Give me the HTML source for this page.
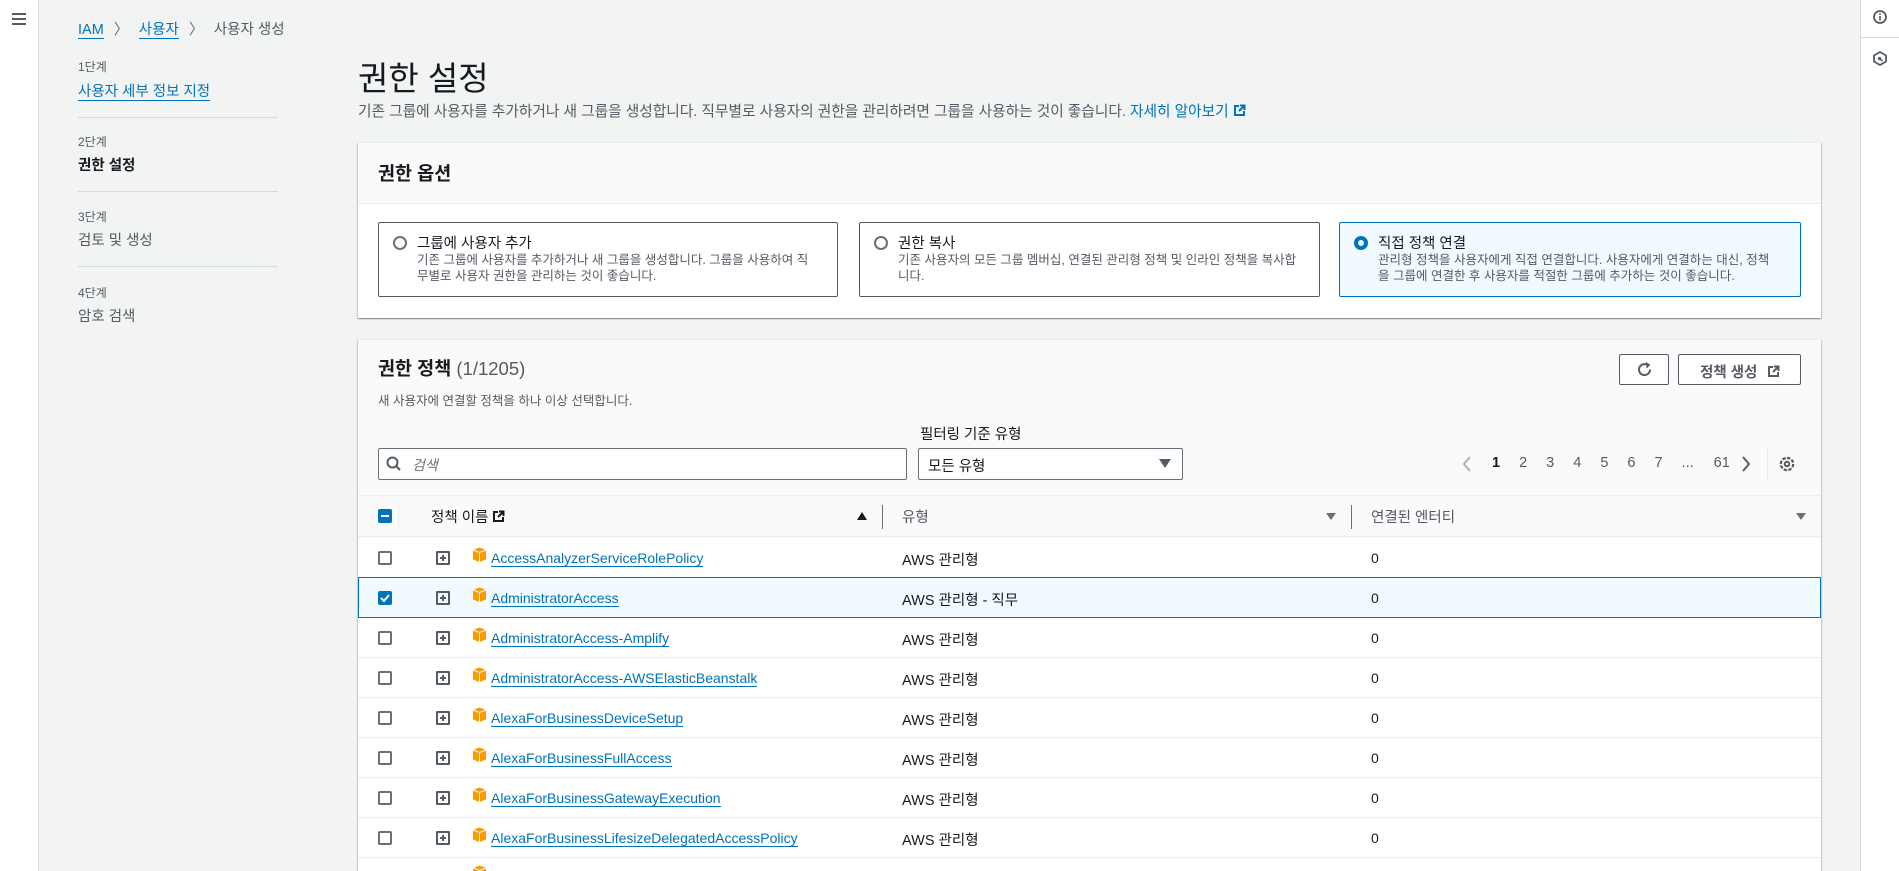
<!DOCTYPE html>
<html><head><meta charset="utf-8"><style>
*{box-sizing:border-box;margin:0;padding:0}
html{overflow:hidden;width:1899px;height:871px}
body{width:1899px;height:871px;overflow:hidden;background:#f2f3f3;font-family:"Liberation Sans","Noto Sans CJK KR",sans-serif;color:#16191f;font-size:14px;position:relative}
.a{position:absolute;white-space:nowrap}
.lnk{color:#0073bb;border-bottom:1px solid #0073bb}
.sec{color:#545b64}
.panel{position:absolute;background:#fff;box-shadow:0 1px 1px 0 rgba(0,28,36,.3),1px 1px 1px 0 rgba(0,28,36,.15),-1px 1px 1px 0 rgba(0,28,36,.15);border-top:1px solid #eaeded}
.cb{position:absolute;width:14px;height:14px;border:2px solid #687078;border-radius:2px;background:#fff}
.plus{position:absolute;width:14px;height:14px;border:2px solid #545b64;border-radius:1px}
.plus:before{content:"";position:absolute;left:2px;top:4px;width:6px;height:2px;background:#545b64}
.plus:after{content:"";position:absolute;left:4px;top:2px;width:2px;height:6px;background:#545b64}
.row{position:absolute;left:358px;width:1463px;height:40px;border-bottom:1px solid #eaeded}
.tile{position:absolute;top:222px;height:75px;border:1px solid #545b64;border-radius:2px}
.radio{position:absolute;left:14px;top:13px;width:14px;height:14px;border:2px solid #687078;border-radius:50%}
.desc{font-size:12.5px;line-height:16px;white-space:normal;width:400px}
.pn{font-size:14px}
</style></head><body>
<div class="a" style="left:0;top:0;width:39px;height:871px;background:#fff;border-right:1px solid #d5dbdb"></div>
<div class="a" style="left:12px;top:13px;width:14px;height:2px;background:#545b64;box-shadow:0 5px 0 #545b64,0 10px 0 #545b64"></div>
<div class="a" style="left:1860px;top:0;width:39px;height:871px;background:#fff;border-left:1px solid #d5dbdb"></div>
<div class="a" style="left:1861px;top:37px;width:38px;height:1px;background:#d5dbdb"></div>
<svg class="a" style="left:1873px;top:10px" width="14" height="14" viewBox="0 0 14 14"><circle cx="7" cy="7" r="6" fill="none" stroke="#545b64" stroke-width="1.8"/><rect x="6.2" y="6" width="1.6" height="4.5" fill="#545b64"/><rect x="6.2" y="3.2" width="1.6" height="1.6" fill="#545b64"/></svg>
<svg class="a" style="left:1873px;top:51px" width="14" height="15" viewBox="0 0 14 15"><path d="M7 1 L13 4.5 V10.5 L7 14 L1 10.5 V4.5 Z" fill="none" stroke="#545b64" stroke-width="1.8"/><circle cx="6.5" cy="7.5" r="1.6" fill="#545b64"/><path d="M7 8 L9.5 10" stroke="#545b64" stroke-width="1.6"/></svg>

<div class="a" style="left:78px;top:18px;font-size:14.5px"><span class="lnk">IAM</span><span style="color:#687078;margin:0 10px;font-size:15px">〉</span><span class="lnk">사용자</span><span style="color:#687078;margin:0 10px;font-size:15px">〉</span><span class="sec">사용자 생성</span></div>

<div class="a sec" style="left:78px;top:58px;font-size:12px">1단계</div>
<div class="a" style="left:78px;top:80px;font-size:14.5px"><span class="lnk">사용자 세부 정보 지정</span></div>
<div class="a" style="left:78px;top:117px;width:200px;height:1px;background:#d5dbdb"></div>
<div class="a sec" style="left:78px;top:133px;font-size:12px">2단계</div>
<div class="a" style="left:78px;top:154px;font-size:14.5px;font-weight:bold">권한 설정</div>
<div class="a" style="left:78px;top:191px;width:200px;height:1px;background:#d5dbdb"></div>
<div class="a sec" style="left:78px;top:208px;font-size:12px">3단계</div>
<div class="a sec" style="left:78px;top:229px;font-size:14.5px">검토 및 생성</div>
<div class="a" style="left:78px;top:266px;width:200px;height:1px;background:#d5dbdb"></div>
<div class="a sec" style="left:78px;top:284px;font-size:12px">4단계</div>
<div class="a sec" style="left:78px;top:305px;font-size:14.5px">암호 검색</div>

<div class="a" style="left:358px;top:52px;font-size:33px">권한 설정</div>
<div class="a sec" style="left:358px;top:100px;font-size:14.7px">기존 그룹에 사용자를 추가하거나 새 그룹을 생성합니다. 직무별로 사용자의 권한을 관리하려면 그룹을 사용하는 것이 좋습니다. <span style="color:#0073bb">자세히 알아보기</span> <svg width="13" height="13" viewBox="0 0 13 13" style="vertical-align:-1px"><path d="M6 2H2V11H11V7" fill="none" stroke="#0073bb" stroke-width="2"/><path d="M7 1.5H11.5V6M11 2L6 7" fill="none" stroke="#0073bb" stroke-width="2"/></svg></div>

<div class="panel" style="left:358px;top:142px;width:1463px;height:176px"></div>
<div class="a" style="left:358px;top:143px;width:1463px;height:61px;background:#fafafa;border-bottom:1px solid #eaeded"></div>
<div class="a" style="left:378px;top:160px;font-size:18.5px;font-weight:bold">권한 옵션</div>
<div class="tile" style="left:378px;width:460px">
 <div class="radio"></div>
 <div class="a" style="left:38px;top:9px;font-size:14.5px">그룹에 사용자 추가</div>
 <div class="a sec desc" style="left:38px;top:29px">기존 그룹에 사용자를 추가하거나 새 그룹을 생성합니다. 그룹을 사용하여 직무별로 사용자 권한을 관리하는 것이 좋습니다.</div>
</div>
<div class="tile" style="left:859px;width:461px">
 <div class="radio"></div>
 <div class="a" style="left:38px;top:9px;font-size:14.5px">권한 복사</div>
 <div class="a sec desc" style="left:38px;top:29px">기존 사용자의 모든 그룹 멤버십, 연결된 관리형 정책 및 인라인 정책을 복사합니다.</div>
</div>
<div class="tile" style="left:1339px;width:462px;border-color:#0073bb;background:#f1faff">
 <div class="radio" style="border:4px solid #0073bb"></div>
 <div class="a" style="left:38px;top:9px;font-size:14.5px">직접 정책 연결</div>
 <div class="a sec desc" style="left:38px;top:29px">관리형 정책을 사용자에게 직접 연결합니다. 사용자에게 연결하는 대신, 정책을 그룹에 연결한 후 사용자를 적절한 그룹에 추가하는 것이 좋습니다.</div>
</div>

<div class="panel" style="left:358px;top:339px;width:1463px;height:532px;background:#fafafa"></div>
<div class="a" style="left:378px;top:355px;font-size:18.5px"><b>권한 정책</b> <span class="sec">(1/1205)</span></div>
<div class="a sec" style="left:378px;top:390px;font-size:12.5px">새 사용자에 연결할 정책을 하나 이상 선택합니다.</div>
<div class="a" style="left:1619px;top:354px;width:50px;height:31px;border:1px solid #545b64;border-radius:2px;background:#fff"></div>
<svg class="a" style="left:1636px;top:361px" width="17" height="17" viewBox="0 0 17 17"><path d="M14 8.5A5.5 5.5 0 1 1 11.5 4" fill="none" stroke="#545b64" stroke-width="2"/><path d="M10 1.5L13.5 4 10.5 7" fill="#545b64" stroke="#545b64" stroke-width="1"/></svg>
<div class="a" style="left:1678px;top:354px;width:123px;height:31px;border:1px solid #545b64;border-radius:2px;background:#fff;font-size:14.5px;padding:6px 0 0 21px;color:#545b64;font-weight:bold">정책 생성 <svg width="13" height="13" viewBox="0 0 13 13" style="vertical-align:-1px;margin-left:6px"><path d="M6 2H2V11H11V7" fill="none" stroke="#545b64" stroke-width="2"/><path d="M7 1.5H11.5V6M11 2L6 7" fill="none" stroke="#545b64" stroke-width="2"/></svg></div>

<div class="a" style="left:920px;top:423px;font-size:14.5px">필터링 기준 유형</div>
<div class="a" style="left:378px;top:448px;width:529px;height:32px;border:1px solid #687078;border-radius:2px;background:#fff"></div>
<svg class="a" style="left:386px;top:456px" width="16" height="16" viewBox="0 0 16 16"><circle cx="6.5" cy="6.5" r="5" fill="none" stroke="#545b64" stroke-width="2"/><path d="M10 10L14 14" stroke="#545b64" stroke-width="2"/></svg>
<div class="a sec" style="left:412px;top:455px;font-style:italic;color:#687078">검색</div>
<div class="a" style="left:918px;top:448px;width:265px;height:32px;border:1px solid #687078;border-radius:2px;background:#fff"></div>
<div class="a" style="left:928px;top:455px;font-size:14.5px">모든 유형</div>
<div class="a" style="left:1159px;top:459px;width:0;height:0;border-left:6px solid transparent;border-right:6px solid transparent;border-top:9px solid #545b64"></div>

<svg class="a" style="left:1462px;top:455px" width="10" height="18" viewBox="0 0 10 18"><path d="M8 2L2 9 8 16" fill="none" stroke="#aab7b8" stroke-width="2"/></svg>
<div class="a" style="left:1492px;top:455px;font-size:14.5px"><b>1</b><span class="sec" style="margin-left:19px">2</span><span class="sec" style="margin-left:19px">3</span><span class="sec" style="margin-left:19px">4</span><span class="sec" style="margin-left:19px">5</span><span class="sec" style="margin-left:19px">6</span><span class="sec" style="margin-left:19px">7</span><span class="sec" style="margin-left:19px">...</span><span class="sec" style="margin-left:20px">61</span></div>
<svg class="a" style="left:1741px;top:455px" width="10" height="18" viewBox="0 0 10 18"><path d="M2 2L8 9 2 16" fill="none" stroke="#545b64" stroke-width="2"/></svg>
<div class="a" style="left:1767px;top:448px;width:1px;height:32px;background:#eaeded"></div>
<svg class="a" style="left:1778px;top:455px" width="18" height="18" viewBox="0 0 16 16"><circle cx="8" cy="8" r="5.5" fill="none" stroke="#545b64" stroke-width="2" stroke-dasharray="3 1.3"/><circle cx="8" cy="8" r="2" fill="none" stroke="#545b64" stroke-width="1.8"/></svg>

<div class="a" style="left:358px;top:495px;width:1463px;height:42px;border-top:1px solid #eaeded;border-bottom:1px solid #eaeded;background:#fafafa"></div>
<div class="a" style="left:378px;top:509px;width:14px;height:14px;background:#0073bb;border-radius:2px"><div style="position:absolute;left:3px;top:6px;width:8px;height:2px;background:#fff"></div></div>
<div class="a" style="left:398px;top:505px;width:1px;height:24px;background:#eaeded"></div>
<div class="a" style="left:431px;top:506px;font-size:14.5px">정책 이름 <svg width="13" height="13" viewBox="0 0 13 13" style="vertical-align:-1px"><path d="M6 2H2V11H11V7" fill="none" stroke="#16191f" stroke-width="2"/><path d="M7 1.5H11.5V6M11 2L6 7" fill="none" stroke="#16191f" stroke-width="2"/></svg></div>
<div class="a" style="left:857px;top:512px;width:0;height:0;border-left:5px solid transparent;border-right:5px solid transparent;border-bottom:8px solid #16191f"></div>
<div class="a" style="left:882px;top:505px;width:1px;height:24px;background:#687078"></div>
<div class="a sec" style="left:902px;top:506px;font-size:14.5px">유형</div>
<div class="a" style="left:1326px;top:513px;width:0;height:0;border-left:5px solid transparent;border-right:5px solid transparent;border-top:7px solid #687078"></div>
<div class="a" style="left:1351px;top:505px;width:1px;height:24px;background:#687078"></div>
<div class="a sec" style="left:1371px;top:506px;font-size:14.5px">연결된 엔터티</div>
<div class="a" style="left:1796px;top:513px;width:0;height:0;border-left:5px solid transparent;border-right:5px solid transparent;border-top:7px solid #687078"></div>

<div class="row" style="top:538px;background:#fff"></div>
<div class="row" style="background:#f1faff;border:1px solid #0073bb;height:41px;top:577px"></div>
<div class="row" style="top:618px;background:#fff"></div>
<div class="row" style="top:658px;background:#fff"></div>
<div class="row" style="top:698px;background:#fff"></div>
<div class="row" style="top:738px;background:#fff"></div>
<div class="row" style="top:778px;background:#fff"></div>
<div class="row" style="top:818px;background:#fff"></div>
<div class="row" style="top:858px;height:13px;background:#fff;border:none"></div>

<div class="cb" style="left:378px;top:551px"></div>
<div class="a" style="left:378px;top:591px;width:14px;height:14px;background:#0073bb;border-radius:2px"><svg width="14" height="14" viewBox="0 0 14 14" style="position:absolute;left:0;top:0"><path d="M3 7L6 10 11 4" fill="none" stroke="#fff" stroke-width="2"/></svg></div>
<div class="cb" style="left:378px;top:631px"></div>
<div class="cb" style="left:378px;top:671px"></div>
<div class="cb" style="left:378px;top:711px"></div>
<div class="cb" style="left:378px;top:751px"></div>
<div class="cb" style="left:378px;top:791px"></div>
<div class="cb" style="left:378px;top:831px"></div>

<div class="plus" style="left:436px;top:551px"></div>
<div class="plus" style="left:436px;top:591px"></div>
<div class="plus" style="left:436px;top:631px"></div>
<div class="plus" style="left:436px;top:671px"></div>
<div class="plus" style="left:436px;top:711px"></div>
<div class="plus" style="left:436px;top:751px"></div>
<div class="plus" style="left:436px;top:791px"></div>
<div class="plus" style="left:436px;top:831px"></div>

<svg width="0" height="0" style="position:absolute"><defs><g id="box"><path d="M1 3L7.5 0.5 14 3V12.5L7.5 15 1 12.5Z" fill="#f90"/><path d="M1 3L7.5 5.5 14 3M7.5 5.5V15" fill="none" stroke="#fff" stroke-width="1"/></g></defs></svg>
<svg class="a" style="left:472px;top:547px" width="15" height="16"><use href="#box"/></svg>
<svg class="a" style="left:472px;top:587px" width="15" height="16"><use href="#box"/></svg>
<svg class="a" style="left:472px;top:627px" width="15" height="16"><use href="#box"/></svg>
<svg class="a" style="left:472px;top:667px" width="15" height="16"><use href="#box"/></svg>
<svg class="a" style="left:472px;top:707px" width="15" height="16"><use href="#box"/></svg>
<svg class="a" style="left:472px;top:747px" width="15" height="16"><use href="#box"/></svg>
<svg class="a" style="left:472px;top:787px" width="15" height="16"><use href="#box"/></svg>
<svg class="a" style="left:472px;top:827px" width="15" height="16"><use href="#box"/></svg>
<svg class="a" style="left:472px;top:865px" width="15" height="6"><use href="#box"/></svg>

<div class="a pn" style="left:491px;top:550px"><span class="lnk">AccessAnalyzerServiceRolePolicy</span></div>
<div class="a pn" style="left:491px;top:590px"><span class="lnk">AdministratorAccess</span></div>
<div class="a pn" style="left:491px;top:630px"><span class="lnk">AdministratorAccess-Amplify</span></div>
<div class="a pn" style="left:491px;top:670px"><span class="lnk">AdministratorAccess-AWSElasticBeanstalk</span></div>
<div class="a pn" style="left:491px;top:710px"><span class="lnk">AlexaForBusinessDeviceSetup</span></div>
<div class="a pn" style="left:491px;top:750px"><span class="lnk">AlexaForBusinessFullAccess</span></div>
<div class="a pn" style="left:491px;top:790px"><span class="lnk">AlexaForBusinessGatewayExecution</span></div>
<div class="a pn" style="left:491px;top:830px"><span class="lnk">AlexaForBusinessLifesizeDelegatedAccessPolicy</span></div>

<div class="a" style="left:902px;top:549px;font-size:14.5px">AWS 관리형</div>
<div class="a" style="left:902px;top:589px;font-size:14.5px">AWS 관리형 - 직무</div>
<div class="a" style="left:902px;top:629px;font-size:14.5px">AWS 관리형</div>
<div class="a" style="left:902px;top:669px;font-size:14.5px">AWS 관리형</div>
<div class="a" style="left:902px;top:709px;font-size:14.5px">AWS 관리형</div>
<div class="a" style="left:902px;top:749px;font-size:14.5px">AWS 관리형</div>
<div class="a" style="left:902px;top:789px;font-size:14.5px">AWS 관리형</div>
<div class="a" style="left:902px;top:829px;font-size:14.5px">AWS 관리형</div>

<div class="a" style="left:1371px;top:550px">0</div>
<div class="a" style="left:1371px;top:590px">0</div>
<div class="a" style="left:1371px;top:630px">0</div>
<div class="a" style="left:1371px;top:670px">0</div>
<div class="a" style="left:1371px;top:710px">0</div>
<div class="a" style="left:1371px;top:750px">0</div>
<div class="a" style="left:1371px;top:790px">0</div>
<div class="a" style="left:1371px;top:830px">0</div>
</body></html>
